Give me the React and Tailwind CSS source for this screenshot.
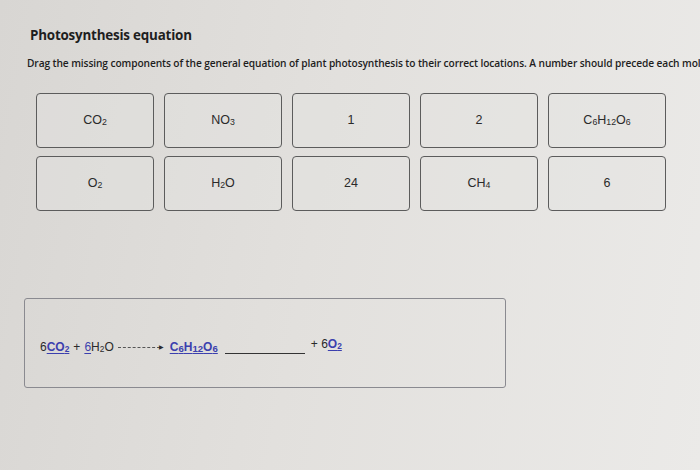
import React from "react";

const Sub = ({ children, size = "text-[0.7em]" }) => (
  <sub className={`${size} align-baseline relative top-[0.15em]`}>{children}</sub>
);

const tiles = [
  [<>CO<Sub>2</Sub></>, <>NO<Sub>3</Sub></>, "1", "2", <>C<Sub>6</Sub>H<Sub>12</Sub>O<Sub>6</Sub></>],
  [<>O<Sub>2</Sub></>, <>H<Sub>2</Sub>O</>, "24", <>CH<Sub>4</Sub></>, "6"],
];

function Tile({ children }) {
  return (
    <div className="h-[55px] rounded-[4px] border-[1.5px] border-[#5c5c5c] bg-[#e4e3e0]/40 flex items-center justify-center text-[12.5px] text-[#2a2a2a] [font-family:'Liberation_Sans',Arial,sans-serif]">
      <span>{children}</span>
    </div>
  );
}

function Link({ children }) {
  return <span className="text-[#3b3fae] font-bold underline decoration-[1px] underline-offset-[2px]">{children}</span>;
}

export default function App() {
  return (
    <div className="w-[700px] h-[470px] overflow-hidden bg-[linear-gradient(100deg,#d8d6d3_0%,#e2e0dd_45%,#ebeae8_100%)] relative">
      <div className="pl-[30px] pt-[26px] [font-family:'Open_Sans',sans-serif] text-[#1e1e1e]">
        <h1 className="text-[13.4px] font-bold leading-[18px] tracking-[-0.2px]">Photosynthesis equation</h1>
        <p className="mt-[12px] ml-[-3px] text-[10.2px] font-semibold leading-[15px] whitespace-nowrap tracking-[-0.1px]">
          Drag the missing components of the general equation of plant photosynthesis to their correct locations. A number should precede each molecule.
        </p>
      </div>

      <div className="mt-[22px] ml-[36px] grid grid-cols-[repeat(5,118px)] gap-x-[10px] gap-y-[8px]">
        {tiles.flat().map((t, i) => (
          <Tile key={i}>{t}</Tile>
        ))}
      </div>

      <div className="mt-[87px] ml-[24px] w-[482px] h-[90px] rounded-[3px] border-[1.5px] border-[#8a8a90] flex items-center pl-[15px] pt-[8px] text-[12px] text-[#2a2a2a] [font-family:'Liberation_Sans',Arial,sans-serif]">
        <span>6</span>
        <Link>CO<Sub>2</Sub></Link>
        <span className="ml-[4px]">+</span>
        <span className="ml-[4px] text-[#3b3fae] underline underline-offset-[2px]">6</span>
        <span>H<Sub>2</Sub>O</span>
        <span className="ml-[4px] flex items-center">
          <span className="w-[42px] border-t border-dashed border-[#555]"></span>
          <span className="text-[6px] leading-none -ml-[1px]">&#9654;</span>
        </span>
        <span className="ml-[6px]"><Link>C<Sub size="text-[0.8em]">6</Sub>H<Sub size="text-[0.8em]">12</Sub>O<Sub size="text-[0.8em]">6</Sub></Link></span>
        <span className="ml-[7px] w-[80px] border-b border-[#333] self-center mt-[12px]"></span>
        <span className="ml-[6px] -mt-[6px]">+ 6<Link>O<Sub>2</Sub></Link></span>
      </div>
    </div>
  );
}
